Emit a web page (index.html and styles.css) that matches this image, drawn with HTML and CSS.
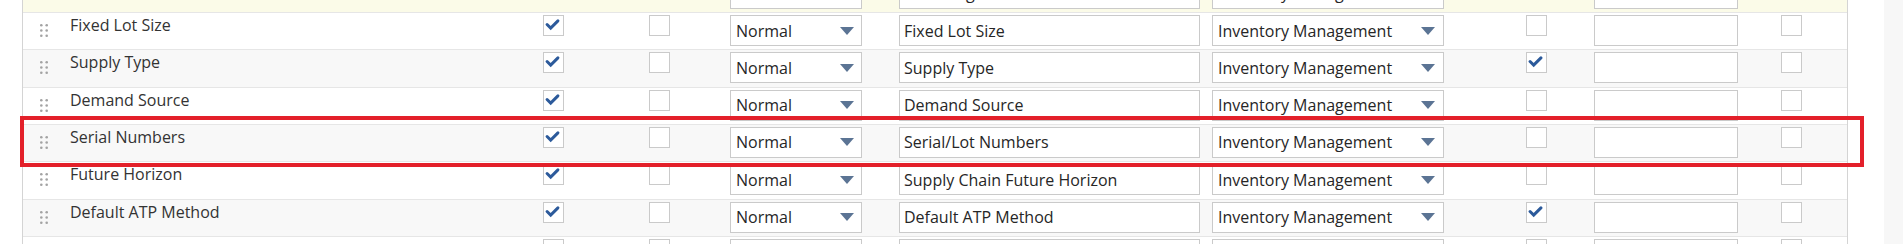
FILE: index.html
```html
<!DOCTYPE html>
<html lang="en">
<head>
    <meta charset="UTF-8">
    <meta name="viewport" content="width=device-width, initial-scale=1.0">
    <title>Item Fields</title>
    <link rel="stylesheet" href="styles.css">
</head>
<body>

    <div class="page">
        <div class="sublist">

            <!-- row being edited, scrolled mostly out of view -->
            <div class="row row-current">
                <div class="handle"><svg width="8" height="13" viewBox="0 0 8 13"><circle cx="1.3" cy="1.3" r="1.3"/><circle cx="6.7" cy="1.3" r="1.3"/><circle cx="1.3" cy="6.5" r="1.3"/><circle cx="6.7" cy="6.5" r="1.3"/><circle cx="1.3" cy="11.7" r="1.3"/><circle cx="6.7" cy="11.7" r="1.3"/></svg></div>
                <div class="label">Lot Sizing Method</div>
                <div><span class="cb"><svg viewBox="0 0 21 21"><polyline points="4.5,10.5 8.5,14.5 16.5,6.5"/></svg></span></div>
                <div><span class="cb"></span></div>
                <div class="select"><span>Normal</span><span class="caret"></span></div>
                <div><input class="text" type="text" value="Lot Sizing Method"></div>
                <div class="select wide"><span>Inventory Management</span><span class="caret"></span></div>
                <div><span class="cb"></span></div>
                <div><input class="text short" type="text" value=""></div>
                <div><span class="cb"></span></div>
            </div>

            <div class="row">
                <div class="handle"><svg width="8" height="13" viewBox="0 0 8 13"><circle cx="1.3" cy="1.3" r="1.3"/><circle cx="6.7" cy="1.3" r="1.3"/><circle cx="1.3" cy="6.5" r="1.3"/><circle cx="6.7" cy="6.5" r="1.3"/><circle cx="1.3" cy="11.7" r="1.3"/><circle cx="6.7" cy="11.7" r="1.3"/></svg></div>
                <div class="label">Fixed Lot Size</div>
                <div><span class="cb"><svg viewBox="0 0 21 21"><polyline points="4.5,10.5 8.5,14.5 16.5,6.5"/></svg></span></div>
                <div><span class="cb"></span></div>
                <div class="select"><span>Normal</span><span class="caret"></span></div>
                <div><input class="text" type="text" value="Fixed Lot Size"></div>
                <div class="select wide"><span>Inventory Management</span><span class="caret"></span></div>
                <div><span class="cb"></span></div>
                <div><input class="text short" type="text" value=""></div>
                <div><span class="cb"></span></div>
            </div>

            <div class="row">
                <div class="handle"><svg width="8" height="13" viewBox="0 0 8 13"><circle cx="1.3" cy="1.3" r="1.3"/><circle cx="6.7" cy="1.3" r="1.3"/><circle cx="1.3" cy="6.5" r="1.3"/><circle cx="6.7" cy="6.5" r="1.3"/><circle cx="1.3" cy="11.7" r="1.3"/><circle cx="6.7" cy="11.7" r="1.3"/></svg></div>
                <div class="label">Supply Type</div>
                <div><span class="cb"><svg viewBox="0 0 21 21"><polyline points="4.5,10.5 8.5,14.5 16.5,6.5"/></svg></span></div>
                <div><span class="cb"></span></div>
                <div class="select"><span>Normal</span><span class="caret"></span></div>
                <div><input class="text" type="text" value="Supply Type"></div>
                <div class="select wide"><span>Inventory Management</span><span class="caret"></span></div>
                <div><span class="cb"><svg viewBox="0 0 21 21"><polyline points="4.5,10.5 8.5,14.5 16.5,6.5"/></svg></span></div>
                <div><input class="text short" type="text" value=""></div>
                <div><span class="cb"></span></div>
            </div>

            <div class="row">
                <div class="handle"><svg width="8" height="13" viewBox="0 0 8 13"><circle cx="1.3" cy="1.3" r="1.3"/><circle cx="6.7" cy="1.3" r="1.3"/><circle cx="1.3" cy="6.5" r="1.3"/><circle cx="6.7" cy="6.5" r="1.3"/><circle cx="1.3" cy="11.7" r="1.3"/><circle cx="6.7" cy="11.7" r="1.3"/></svg></div>
                <div class="label">Demand Source</div>
                <div><span class="cb"><svg viewBox="0 0 21 21"><polyline points="4.5,10.5 8.5,14.5 16.5,6.5"/></svg></span></div>
                <div><span class="cb"></span></div>
                <div class="select"><span>Normal</span><span class="caret"></span></div>
                <div><input class="text" type="text" value="Demand Source"></div>
                <div class="select wide"><span>Inventory Management</span><span class="caret"></span></div>
                <div><span class="cb"></span></div>
                <div><input class="text short" type="text" value=""></div>
                <div><span class="cb"></span></div>
            </div>

            <div class="row">
                <div class="handle"><svg width="8" height="13" viewBox="0 0 8 13"><circle cx="1.3" cy="1.3" r="1.3"/><circle cx="6.7" cy="1.3" r="1.3"/><circle cx="1.3" cy="6.5" r="1.3"/><circle cx="6.7" cy="6.5" r="1.3"/><circle cx="1.3" cy="11.7" r="1.3"/><circle cx="6.7" cy="11.7" r="1.3"/></svg></div>
                <div class="label">Serial Numbers</div>
                <div><span class="cb"><svg viewBox="0 0 21 21"><polyline points="4.5,10.5 8.5,14.5 16.5,6.5"/></svg></span></div>
                <div><span class="cb"></span></div>
                <div class="select"><span>Normal</span><span class="caret"></span></div>
                <div><input class="text" type="text" value="Serial/Lot Numbers"></div>
                <div class="select wide"><span>Inventory Management</span><span class="caret"></span></div>
                <div><span class="cb"></span></div>
                <div><input class="text short" type="text" value=""></div>
                <div><span class="cb"></span></div>
            </div>

            <div class="row">
                <div class="handle"><svg width="8" height="13" viewBox="0 0 8 13"><circle cx="1.3" cy="1.3" r="1.3"/><circle cx="6.7" cy="1.3" r="1.3"/><circle cx="1.3" cy="6.5" r="1.3"/><circle cx="6.7" cy="6.5" r="1.3"/><circle cx="1.3" cy="11.7" r="1.3"/><circle cx="6.7" cy="11.7" r="1.3"/></svg></div>
                <div class="label">Future Horizon</div>
                <div><span class="cb"><svg viewBox="0 0 21 21"><polyline points="4.5,10.5 8.5,14.5 16.5,6.5"/></svg></span></div>
                <div><span class="cb"></span></div>
                <div class="select"><span>Normal</span><span class="caret"></span></div>
                <div><input class="text" type="text" value="Supply Chain Future Horizon"></div>
                <div class="select wide"><span>Inventory Management</span><span class="caret"></span></div>
                <div><span class="cb"></span></div>
                <div><input class="text short" type="text" value=""></div>
                <div><span class="cb"></span></div>
            </div>

            <div class="row">
                <div class="handle"><svg width="8" height="13" viewBox="0 0 8 13"><circle cx="1.3" cy="1.3" r="1.3"/><circle cx="6.7" cy="1.3" r="1.3"/><circle cx="1.3" cy="6.5" r="1.3"/><circle cx="6.7" cy="6.5" r="1.3"/><circle cx="1.3" cy="11.7" r="1.3"/><circle cx="6.7" cy="11.7" r="1.3"/></svg></div>
                <div class="label">Default ATP Method</div>
                <div><span class="cb"><svg viewBox="0 0 21 21"><polyline points="4.5,10.5 8.5,14.5 16.5,6.5"/></svg></span></div>
                <div><span class="cb"></span></div>
                <div class="select"><span>Normal</span><span class="caret"></span></div>
                <div><input class="text" type="text" value="Default ATP Method"></div>
                <div class="select wide"><span>Inventory Management</span><span class="caret"></span></div>
                <div><span class="cb"><svg viewBox="0 0 21 21"><polyline points="4.5,10.5 8.5,14.5 16.5,6.5"/></svg></span></div>
                <div><input class="text short" type="text" value=""></div>
                <div><span class="cb"></span></div>
            </div>

            <div class="row">
                <div class="handle"></div>
                <div class="label"></div>
                <div><span class="cb"></span></div>
                <div><span class="cb"></span></div>
                <div class="select"><span>Normal</span><span class="caret"></span></div>
                <div><input class="text" type="text" value=""></div>
                <div class="select wide"><span>Inventory Management</span><span class="caret"></span></div>
                <div><span class="cb"></span></div>
                <div><input class="text short" type="text" value=""></div>
                <div><span class="cb"></span></div>
            </div>

        </div>
        <div class="gutter"></div>
    </div>

    <!-- highlight drawn over the Serial Numbers row -->
    <div class="callout"></div>

</body>
</html>
```

FILE: styles.css
```css
* {
    box-sizing: border-box;
}

body {
    margin: 0;
    font-family: "Open Sans", "Liberation Sans", sans-serif;
    color: #333;
    background-color: #fff;
    overflow: hidden;
}

/* page: list plus the light strip at the right edge */
.page {
    display: flex;
    height: 100vh;
}

.sublist {
    flex: none;
    width: 1826px;
    margin-left: 22px;
    border-left: 1px solid #d4d4d4;
    border-right: 1px solid #d4d4d4;
}

.gutter {
    flex: none;
    width: 19px;
    margin-left: auto;
    background-color: #f7f7f7;
}

/* one line of the list */
.row {
    display: grid;
    grid-template-columns: 47px 473px 106px 81px 169px 313px 314px 68px 187px 1fr;
    align-items: start;
    height: 37.34px;
    padding-top: 2px;
    border-top: 1px solid #e6e6e6;
    background-color: #fff;
}

.row:nth-child(odd) {
    background-color: #f8f8f8;
}

/* the row in edit mode, scrolled up so only its bottom shows */
.row.row-current {
    margin-top: -25.34px;
    padding-top: 3px;
    border-top: none;
    background-color: #fbfbe8;
}

.handle {
    padding-left: 17px;
    margin-top: 9px;
    height: 13px;
}

.handle svg {
    display: block;
    fill: #a3a3a3;
}

.label {
    font-size: 16px;
    line-height: 20px;
    color: #333;
    white-space: nowrap;
}

/* checkbox */
.cb {
    display: block;
    width: 21px;
    height: 21px;
    border: 1px solid #cacaca;
    background-color: #fff;
}

.cb svg {
    display: block;
    width: 19px;
    height: 19px;
    margin: -1px 0 0 -1px;
    overflow: visible;
}

.cb polyline {
    fill: none;
    stroke: #2c5a9b;
    stroke-width: 3.3;
    stroke-linecap: round;
    stroke-linejoin: miter;
}

/* dropdowns */
.select {
    display: flex;
    align-items: center;
    justify-content: space-between;
    width: 132px;
    height: 31px;
    padding: 0 7px 0 5px;
    border: 1px solid #cacaca;
    background-color: #fff;
    font-size: 16px;
    color: #262626;
    white-space: nowrap;
}

.select.wide {
    width: 232px;
    padding-right: 8px;
}

.caret {
    width: 0;
    height: 0;
    border-left: 7px solid transparent;
    border-right: 7px solid transparent;
    border-top: 8px solid #5b7494;
}

/* text fields */
.text {
    display: block;
    width: 301px;
    height: 31px;
    margin: 0;
    padding: 0 4px;
    border: 1px solid #cacaca;
    border-radius: 0;
    background-color: #fff;
    font-family: "Open Sans", "Liberation Sans", sans-serif;
    font-size: 16px;
    color: #262626;
    outline: none;
}

.text.short {
    width: 144px;
}

/* red box marking the Serial Numbers row */
.callout {
    position: absolute;
    left: 20px;
    top: 116px;
    width: 1844px;
    height: 51px;
    border: 4px solid #e3202a;
}
```
